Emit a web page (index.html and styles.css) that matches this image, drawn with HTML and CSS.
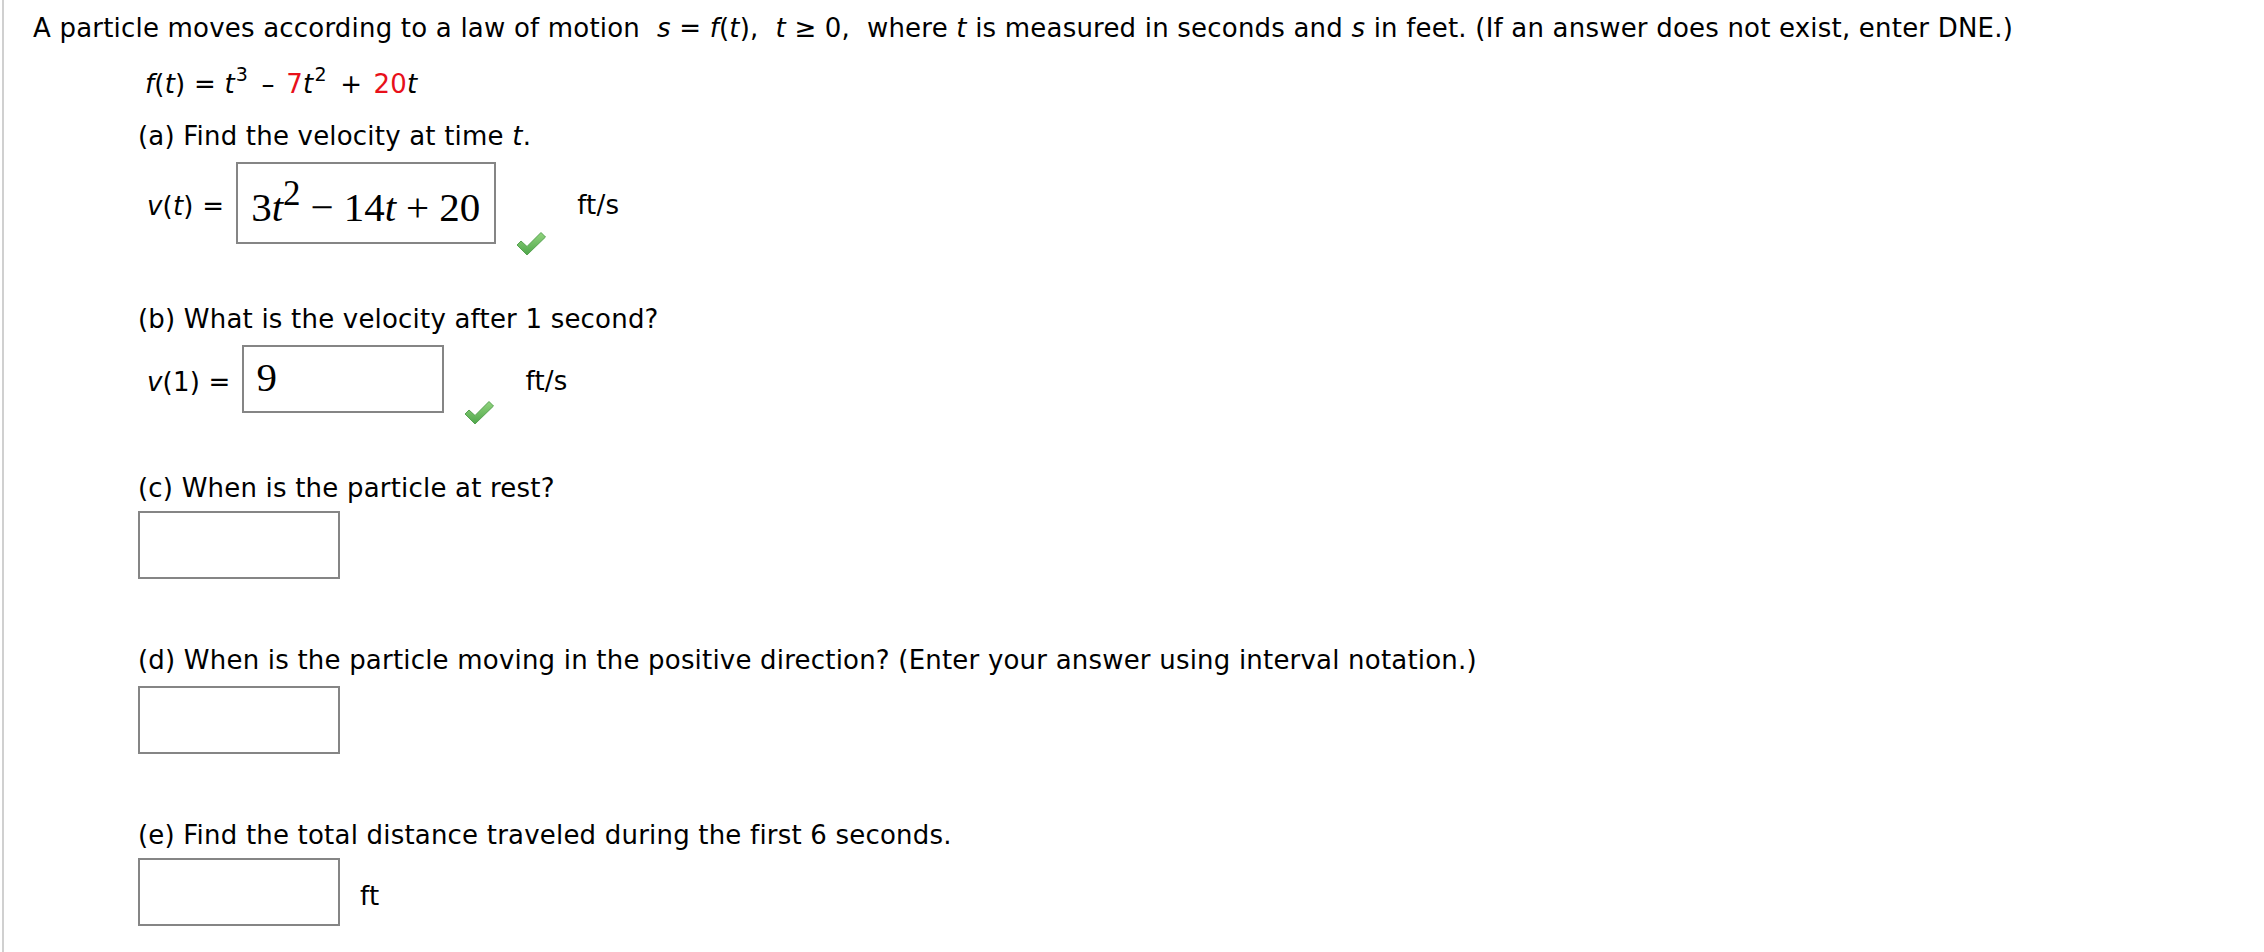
FILE: index.html
```html
<!DOCTYPE html>
<html lang="en">
<head>
<meta charset="utf-8">
<title>Particle motion</title>
<link rel="stylesheet" href="styles.css">
</head>
<body>
<div class="page">
  <p class="intro">A particle moves according to a law of motion&nbsp; <i>s</i> = <i>f</i>(<i>t</i>),&nbsp; <i>t</i> ≥ 0,&nbsp; where <i>t</i> is measured in seconds and <i>s</i> in feet. (If an answer does not exist, enter DNE.)</p>
  <div class="question">
    <p class="formula"><i>f</i>(<i>t</i>) = <i>t</i><sup>3</sup> <span class="fop">–</span> <span class="red">7</span><i>t</i><sup>2</sup> <span class="fop">+</span> <span class="red">20</span><i>t</i></p>

    <div class="part first">
      <p class="prompt">(a) Find the velocity at time <i>t</i>.</p>
      <div class="answer-row">
        <span class="label"><i>v</i>(<i>t</i>) =</span>
        <div class="box box-wide"><span class="math">3<i>t</i><sup>2</sup><span class="op">−</span>14<i>t</i><span class="op">+</span>20</span></div>
        <svg class="check" viewBox="0 0 30 25" width="30" height="25" aria-hidden="true">
          <defs><linearGradient id="chk1" x1="0" y1="0" x2="0" y2="1"><stop offset="0" stop-color="#92d47e"/><stop offset="1" stop-color="#4fa64b"/></linearGradient></defs>
          <path d="M1 14 L5 10 L11 15.5 L25 1.5 L29.5 6 L11 24 Z" fill="url(#chk1)" stroke="#56a250" stroke-width="1" stroke-linejoin="round"/>
        </svg>
        <span class="unit">ft/s</span>
      </div>
    </div>

    <div class="part">
      <p class="prompt">(b) What is the velocity after 1 second?</p>
      <div class="answer-row">
        <span class="label"><i>v</i>(1) =</span>
        <div class="box box-filled"><span class="math">9</span></div>
        <svg class="check" viewBox="0 0 30 25" width="30" height="25" aria-hidden="true">
          <defs><linearGradient id="chk2" x1="0" y1="0" x2="0" y2="1"><stop offset="0" stop-color="#92d47e"/><stop offset="1" stop-color="#4fa64b"/></linearGradient></defs>
          <path d="M1 14 L5 10 L11 15.5 L25 1.5 L29.5 6 L11 24 Z" fill="url(#chk2)" stroke="#56a250" stroke-width="1" stroke-linejoin="round"/>
        </svg>
        <span class="unit">ft/s</span>
      </div>
    </div>

    <div class="part">
      <p class="prompt">(c) When is the particle at rest?</p>
      <div class="answer-row tight">
        <div class="box"></div>
      </div>
    </div>

    <div class="part wide-gap">
      <p class="prompt">(d) When is the particle moving in the positive direction? (Enter your answer using interval notation.)</p>
      <div class="answer-row">
        <div class="box"></div>
      </div>
    </div>

    <div class="part wide-gap">
      <p class="prompt">(e) Find the total distance traveled during the first 6 seconds.</p>
      <div class="answer-row tight">
        <div class="box"></div>
        <span class="unit unit-after">ft</span>
      </div>
    </div>
  </div>
</div>
</body>
</html>
```
FILE: styles.css
```css
html, body {
  margin: 0;
  padding: 0;
  background: #ffffff;
}

body {
  font-family: "DejaVu Sans", Verdana, sans-serif;
  font-size: 26px;
  letter-spacing: 0.2px;
  color: #000000;
}

.page {
  box-sizing: border-box;
  min-height: 952px;
  margin-left: 2px;
  border-left: 2px solid #d0d0d0;
  padding: 15px 0 0 29px;
}

p {
  margin: 0;
  line-height: 27px;
}

i {
  font-style: italic;
}

sup {
  font-size: 19px;
  line-height: 0;
  vertical-align: 12px;
}

.formula sup {
  margin: 0 2px 0 1px;
}

.fop {
  margin: 0 3px;
}

.red {
  color: #e8101a;
}

.question {
  margin-left: 105px;
}

.formula {
  margin-top: 29px;
  padding-left: 7px;
}

.part {
  margin-top: 62px;
}

.part.first {
  margin-top: 25px;
}

.part.wide-gap {
  margin-top: 68px;
}

.answer-row {
  display: flex;
  align-items: center;
  margin-top: 12px;
}

.answer-row.tight {
  margin-top: 9px;
}

.label {
  line-height: 27px;
  padding: 6px 0 0 9px;
  margin-right: 12px;
  white-space: nowrap;
}

.box {
  box-sizing: border-box;
  flex: none;
  width: 202px;
  height: 68px;
  border: 2px solid #858585;
  background: #ffffff;
}

.box-wide {
  width: 260px;
  height: 82px;
  padding: 23px 0 0 13px;
}

.box-filled {
  padding: 10px 0 0 12px;
}

.math {
  display: block;
  font-family: "Liberation Serif", "Times New Roman", serif;
  font-size: 41px;
  line-height: 41px;
  letter-spacing: 0;
  white-space: nowrap;
}

.math sup {
  font-size: 35px;
  vertical-align: 16px;
}

.op {
  margin: 0 10px;
}

.check {
  flex: none;
  align-self: flex-end;
  margin: 0 31px -12px 20px;
}

.unit {
  line-height: 27px;
  white-space: nowrap;
  padding-top: 5px;
}

.unit-after {
  margin-left: 20px;
  padding-top: 8px;
}
```
